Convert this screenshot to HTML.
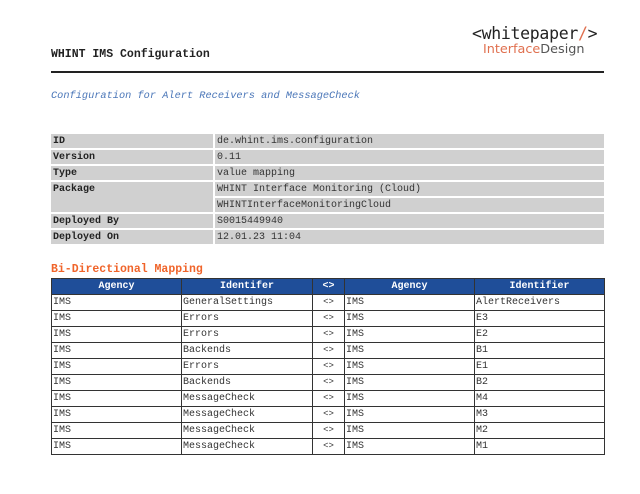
<!DOCTYPE html>
<html><head><style>
body{margin:0;width:640px;height:494px;background:#fff;position:relative;font-family:"Liberation Mono",monospace;color:#333;overflow:hidden}
.a{position:absolute;white-space:nowrap}
table{border-collapse:collapse;position:absolute}
#info{left:51px;top:134px;width:553px;font-size:10px}
#info td{background:#d0d0d0;height:12px;padding:2px 2px 0;border-bottom:2px solid #fff;line-height:12px;vertical-align:top}
#info td.k{font-weight:bold;width:158px;border-right:2px solid #fff;color:#222}
#map{left:51px;top:278px;width:553px;font-size:10px;table-layout:fixed}
#map td,#map th{border:1px solid #333;height:15px;padding:0 1px;line-height:15px;overflow:hidden}
#map th{background:#1f4e99;color:#fff;font-weight:bold;text-align:center;border-color:#333}
#map td.c{text-align:center;font-size:9px}
</style></head><body>
<div class="a" style="left:51px;top:48px;font-size:11.5px;font-weight:bold;color:#222">WHINT IMS Configuration</div>
<div class="a" style="left:472px;top:24px;font-family:'DejaVu Sans Mono',monospace;font-size:16.5px;color:#222;letter-spacing:-0.3px">&lt;whitepaper<span style="color:#e0704f">/</span>&gt;</div>
<div class="a" style="left:483px;top:42px;font-family:'DejaVu Sans',sans-serif;font-size:12.8px;color:#e0704f">Interface<span style="color:#555">Design</span></div>
<div class="a" style="left:51px;top:71px;width:553px;height:2px;background:#222"></div>
<div class="a" style="left:51px;top:90px;font-size:10.3px;font-style:italic;color:#4a76b8">Configuration for Alert Receivers and MessageCheck</div>
<table id="info">
<tr><td class="k">ID</td><td>de.whint.ims.configuration</td></tr>
<tr><td class="k">Version</td><td>0.11</td></tr>
<tr><td class="k">Type</td><td>value mapping</td></tr>
<tr><td class="k" rowspan="2" style="vertical-align:top">Package</td><td>WHINT Interface Monitoring (Cloud)</td></tr>
<tr><td>WHINTInterfaceMonitoringCloud</td></tr>
<tr><td class="k">Deployed By</td><td>S0015449940</td></tr>
<tr><td class="k">Deployed On</td><td>12.01.23 11:04</td></tr>
</table>
<div class="a" style="left:51px;top:263px;font-size:11.5px;font-weight:bold;color:#f0642a">Bi-Directional Mapping</div>
<table id="map">
<colgroup><col style="width:130px"><col style="width:131px"><col style="width:32px"><col style="width:130px"><col style="width:130px"></colgroup>
<tr><th>Agency</th><th>Identifer</th><th>&lt;&gt;</th><th>Agency</th><th>Identifier</th></tr>
<tr><td>IMS</td><td>GeneralSettings</td><td class="c">&lt;&gt;</td><td>IMS</td><td>AlertReceivers</td></tr>
<tr><td>IMS</td><td>Errors</td><td class="c">&lt;&gt;</td><td>IMS</td><td>E3</td></tr>
<tr><td>IMS</td><td>Errors</td><td class="c">&lt;&gt;</td><td>IMS</td><td>E2</td></tr>
<tr><td>IMS</td><td>Backends</td><td class="c">&lt;&gt;</td><td>IMS</td><td>B1</td></tr>
<tr><td>IMS</td><td>Errors</td><td class="c">&lt;&gt;</td><td>IMS</td><td>E1</td></tr>
<tr><td>IMS</td><td>Backends</td><td class="c">&lt;&gt;</td><td>IMS</td><td>B2</td></tr>
<tr><td>IMS</td><td>MessageCheck</td><td class="c">&lt;&gt;</td><td>IMS</td><td>M4</td></tr>
<tr><td>IMS</td><td>MessageCheck</td><td class="c">&lt;&gt;</td><td>IMS</td><td>M3</td></tr>
<tr><td>IMS</td><td>MessageCheck</td><td class="c">&lt;&gt;</td><td>IMS</td><td>M2</td></tr>
<tr><td>IMS</td><td>MessageCheck</td><td class="c">&lt;&gt;</td><td>IMS</td><td>M1</td></tr>
</table>
</body></html>
